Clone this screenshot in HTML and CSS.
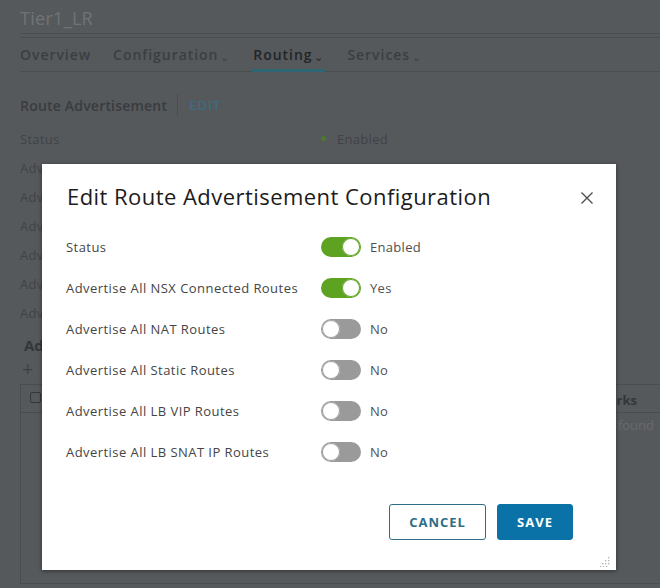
FILE: index.html
```html
<!DOCTYPE html>
<html lang="en">
<head>
<meta charset="utf-8">
<title>Tier1_LR - Routing</title>
<link rel="stylesheet" href="styles.css">
</head>
<body>
<div class="page">
  <div class="head">
    <div class="title">Tier1_LR</div>
  </div>
  <div class="rule2"></div>
  <nav class="tabs">
    <span class="tab">Overview</span>
    <span class="tab">Configuration<span class="chev">⌄</span></span>
    <span class="tab active">Routing<span class="chev">⌄</span></span>
    <span class="tab">Services<span class="chev">⌄</span></span>
  </nav>
  <div class="section-head">
    <span class="section-title">Route Advertisement</span>
    <span class="vdiv"></span>
    <span class="edit">EDIT</span>
  </div>
  <div class="props">
    <div class="prop"><span class="pl">Status</span><span class="pv"><span class="dot"></span>Enabled</span></div>
    <div class="prop"><span class="pl clip">Advertise All NSX Connected Routes</span></div>
    <div class="prop"><span class="pl clip">Advertise All NAT Routes</span></div>
    <div class="prop"><span class="pl clip">Advertise All Static Routes</span></div>
    <div class="prop"><span class="pl clip">Advertise All LB VIP Routes</span></div>
    <div class="prop"><span class="pl clip">Advertise All LB SNAT IP Routes</span></div>
    <div class="prop"><span class="pl clip">Advertise All DNS Forwarder Routes</span></div>
  </div>
  <div class="rules-title"><span class="clip2">Advertisement Rules</span></div>
  <div class="add"><span class="plus">+</span><span class="addtxt">ADD</span></div>
  <div class="table">
    <div class="thead">
      <span class="cb"></span>
      <span class="th-net">Networks</span>
    </div>
    <div class="tbody"><span class="empty">No records found</span></div>
  </div>
</div>

<div class="modal" role="dialog">
  <div class="modal-head">
    <h1 class="modal-title">Edit Route Advertisement Configuration</h1>
    <svg class="close" width="14" height="14" viewBox="0 0 14 14"><path d="M1.5 1.5 L12.5 12.5 M12.5 1.5 L1.5 12.5" stroke="#4a4a4a" stroke-width="1.3" fill="none"/></svg>
  </div>
  <div class="form">
    <div class="row"><span class="label">Status</span><span class="tg on"></span><span class="val">Enabled</span></div>
    <div class="row"><span class="label">Advertise All NSX Connected Routes</span><span class="tg on"></span><span class="val">Yes</span></div>
    <div class="row"><span class="label">Advertise All NAT Routes</span><span class="tg"></span><span class="val">No</span></div>
    <div class="row"><span class="label">Advertise All Static Routes</span><span class="tg"></span><span class="val">No</span></div>
    <div class="row"><span class="label">Advertise All LB VIP Routes</span><span class="tg"></span><span class="val">No</span></div>
    <div class="row"><span class="label">Advertise All LB SNAT IP Routes</span><span class="tg"></span><span class="val">No</span></div>
  </div>
  <div class="footer">
    <button class="btn btn-outline">CANCEL</button>
    <button class="btn btn-primary">SAVE</button>
  </div>
  <svg class="resize" width="10" height="10" viewBox="0 0 10 10">
    <g fill="#b8b8b8"><rect x="8" y="0" width="1.4" height="1.4"/><rect x="5" y="3" width="1.4" height="1.4"/><rect x="8" y="3" width="1.4" height="1.4"/><rect x="2" y="6" width="1.4" height="1.4"/><rect x="5" y="6" width="1.4" height="1.4"/><rect x="8" y="6" width="1.4" height="1.4"/><rect x="0" y="9" width="1.4" height="1"/><rect x="3" y="9" width="1.4" height="1"/><rect x="6" y="9" width="1.4" height="1"/></g>
  </svg>
</div>
</body>
</html>
```
FILE: styles.css
```css
* { box-sizing: border-box; }
html, body { margin: 0; padding: 0; }
body {
  width: 660px;
  height: 588px;
  overflow: hidden;
  position: relative;
  background: #56595c;
  font-family: "Open Sans", "Noto Sans", sans-serif;
  color: #404346;
}

.page { padding-left: 20px; }

.head {
  height: 34px;
  border-bottom: 1px solid #4b4e51;
  padding-top: 7px;
}
.title {
  font-size: 18px;
  line-height: 22px;
  color: #707376;
  letter-spacing: 0.3px;
}
.rule2 { height: 1px; margin-top: 3px; background: #4d5053; }

.tabs {
  display: flex;
  gap: 22px;
  height: 34px;
  border-bottom: 1px solid #4b4e51;
  align-items: stretch;
}
.tab {
  font-size: 14px;
  font-weight: 600;
  letter-spacing: 0.95px;
  color: #3b3e41;
  display: flex;
  align-items: center;
  padding-top: 1px;
  border-bottom: 3px solid transparent;
  margin-bottom: -1px;
}
.tab.active { color: #222528; border-bottom-color: #2e6674; padding-left: 1px; padding-right: 1px; }
.chev { font-size: 11px; margin-left: 2px; position: relative; top: 2px; font-weight: 400; }

.section-head {
  display: flex;
  align-items: center;
  height: 24px;
  margin-top: 21px;
}
.section-title { font-size: 14px; font-weight: 600; color: #393c3f; letter-spacing: 0.2px; }
.vdiv { width: 1px; height: 22px; background: #4a4d50; margin: 0 11px 0 10px; }
.edit { font-size: 13px; letter-spacing: 1px; color: #3c6b80; font-weight: 600; }

.props { margin-top: 7px; }
.prop {
  display: grid;
  grid-template-columns: 300px auto;
  height: 29px;
  align-items: center;
  font-size: 13px;
  letter-spacing: 0.3px;
}
.pl { color: #404346; }
.clip { display: block; max-width: 22px; overflow: hidden; white-space: nowrap; }
.pv { color: #404346; display: flex; align-items: center; }
.dot { width: 5px; height: 5px; border-radius: 50%; background: #4b7b2c; margin: 0 11px 0 1px; }

.rules-title { font-size: 15px; font-weight: 700; color: #33363a; margin-top: 8px; padding-left: 4px; height: 22px; }
.clip2 { display: block; max-width: 18px; overflow: hidden; white-space: nowrap; }
.add { font-size: 12px; color: #3c4043; margin-top: 2px; padding-left: 2px; display: flex; align-items: center; height: 20px; }
.plus { font-size: 20px; line-height: 20px; color: #3c4043; }
.addtxt { display: block; max-width: 0; overflow: hidden; }

.table {
  margin-top: 5px;
  border: 1px solid #4a4d50;
  border-right: none;
  height: 200px;
}
.thead {
  height: 28px;
  display: flex;
  align-items: center;
  border-bottom: 1px solid #4a4d50;
  font-size: 13px;
  font-weight: 700;
  color: #33363a;
  padding-top: 3px;
}
.cb { width: 11px; height: 11px; border: 1px solid #33363a; border-radius: 2px; margin-left: 9px; margin-top: -5px; }
.th-net { margin-left: auto; margin-right: 23px; }
.tbody { display: flex; justify-content: flex-end; padding-top: 3px; padding-right: 6px; }
.empty { font-size: 13px; color: #66696c; }

/* Modal */
.modal {
  position: absolute;
  left: 42px;
  top: 164px;
  width: 574px;
  height: 406px;
  background: #ffffff;
  box-shadow: 0 1px 4px rgba(0, 0, 0, 0.45);
  padding: 18px 0 0 24px;
  color: #454545;
}
.modal-head {
  display: flex;
  align-items: center;
  justify-content: space-between;
  padding-left: 1px;
  padding-right: 22px;
}
.modal-title {
  margin: 0;
  font-size: 22px;
  font-weight: 400;
  line-height: 28px;
  color: #1c1c1c;
  letter-spacing: 0.45px;
}
.close { margin-top: 4px; }

.form { margin-top: 16px; }
.row {
  display: grid;
  grid-template-columns: 255px 40px auto;
  align-items: center;
  height: 41px;
}
.label { font-size: 13px; color: #454545; letter-spacing: 0.45px; white-space: nowrap; }
.val { font-size: 13px; color: #505050; margin-left: 9px; letter-spacing: 0.3px; }

.tg {
  width: 40px;
  height: 20px;
  border-radius: 10px;
  background: #9a9a9a;
  position: relative;
}
.tg::after {
  content: "";
  position: absolute;
  top: 1px;
  left: 1px;
  width: 18px;
  height: 18px;
  border-radius: 50%;
  background: #fff;
  box-shadow: inset 0 0 0 1px #9a9a9a;
}
.tg.on { background: #5ea221; }
.tg.on::after { left: 21px; box-shadow: inset 0 0 0 1px #5ea221; }

.footer {
  display: flex;
  justify-content: flex-end;
  gap: 11px;
  padding-right: 43px;
  margin-top: 32px;
}
.btn {
  height: 36px;
  font-family: "Open Sans", "Noto Sans", sans-serif;
  font-size: 13px;
  font-weight: 700;
  letter-spacing: 1px;
  border-radius: 3px;
  padding: 0;
  cursor: pointer;
}
.btn-outline { width: 97px; background: #fff; color: #2e6d87; border: 1px solid #2e6d87; }
.btn-primary { width: 76px; background: #0a72a6; color: #fff; border: 1px solid #0a72a6; }

.resize { position: absolute; right: 6px; bottom: 3px; }
```
